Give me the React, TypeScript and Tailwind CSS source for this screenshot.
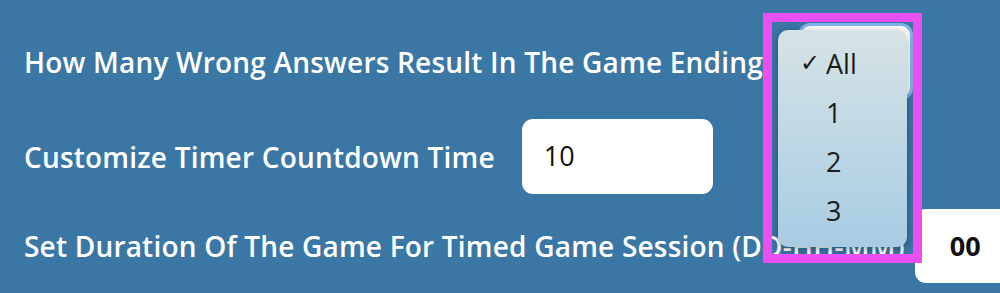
import React from "react";

const font = { fontFamily: '"Open Sans", "Lato", sans-serif' };

const Row = ({ label, children, className }: { label: string; children?: React.ReactNode; className?: string }) => (
  <div className={`flex flex-row items-center ${className ?? ""}`}>
    <p className="whitespace-nowrap text-[28px] font-semibold leading-none tracking-[0.2px] text-white">{label}</p>
    {children}
  </div>
);

export default function App() {
  return (
    <div
      style={font}
      className="relative h-[293px] w-[1000px] overflow-hidden bg-[#3a77a5] pl-[24px] pt-[23px]"
    >
      <div className="flex flex-col">
        {/* row 1 */}
        <Row label="How Many Wrong Answers Result In The Game Ending">
          <div className="ml-[35px] h-[77px] w-[115px] shrink-0 rounded-[12px] border-[3px] border-[#7fb2ec] bg-white" />
        </Row>

        {/* row 2 */}
        <Row label="Customize Timer Countdown Time" className="mt-[19px]">
          <div className="ml-[27px] flex h-[75px] w-[191px] shrink-0 items-center rounded-[11px] bg-white pl-[22px]">
            <span className="text-[27px] text-[#111]">10</span>
          </div>
        </Row>

        {/* row 3 */}
        <Row label="Set Duration Of The Game For Timed Game Session (DD-HH-MM)" className="mt-[15px]">
          <div className="ml-[10px] flex h-[74px] w-[120px] shrink-0 items-center rounded-[11px] bg-white pl-[35px]">
            <span className="text-[27px] font-bold text-[#111]">00</span>
          </div>
        </Row>
      </div>

      {/* open select menu */}
      <div className="absolute left-[778px] top-[30px] flex h-[217px] w-[129px] flex-col rounded-[10px] bg-gradient-to-b from-[#d6e3e5] to-[#a8cce2] pt-[20px] text-[27px] leading-none text-[#1c1c1c] shadow-[0_2px_8px_rgba(0,0,0,0.35)]">
        <div className="flex h-[49px] items-start">
          <span className="w-[48px] pr-[6px] text-right text-[24px]">✓</span>
          <span>All</span>
        </div>
        <div className="flex h-[49px] items-start pl-[48px]">1</div>
        <div className="flex h-[49px] items-start pl-[48px]">2</div>
        <div className="flex h-[49px] items-start pl-[48px]">3</div>
      </div>

      {/* highlight */}
      <div className="pointer-events-none absolute left-[763px] top-[13px] h-[250px] w-[159px] border-[9px] border-[#ea4ff2]" />
    </div>
  );
}
